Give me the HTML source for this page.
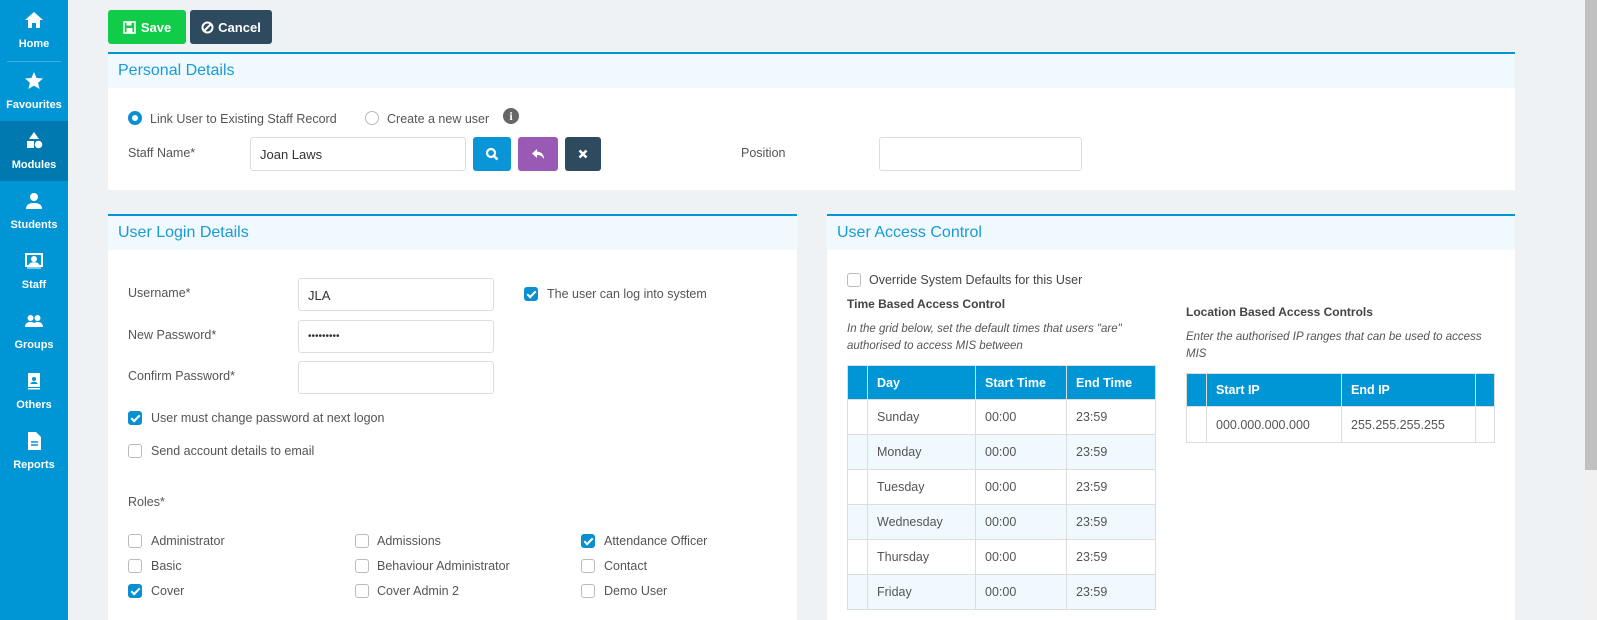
<!DOCTYPE html>
<html><head><meta charset="utf-8"><style>
*{box-sizing:border-box;margin:0;padding:0}
body{width:1597px;height:620px;overflow:hidden;background:#eef2f5;font-family:"Liberation Sans",sans-serif;font-size:12.5px;color:#555;position:relative}
.a{position:absolute}
.side{left:0;top:0;width:68px;height:620px;background:#0095d5}
.nav{position:absolute;left:0;width:68px;height:60px;color:#fff;font-weight:bold;font-size:11px;text-align:center}
.nav span{position:absolute;left:0;right:0;top:38px}
.nav svg{position:absolute;left:24px;top:10px}
.btn{position:absolute;border-radius:3px;color:#fff;font-weight:bold;font-size:13px;display:flex;align-items:center;justify-content:center}
.ph{position:absolute;border-top:2px solid #0095d5;background:#f0f9fd;height:36px;color:#1a9ad6;font-size:16px;padding:8px 10px}
.body{position:absolute;background:#fff}
.inp{position:absolute;border:1px solid #ddd;border-radius:3px;background:#fff;height:34px;padding:9px 9px;color:#333;font-size:13px}
.lb{position:absolute;color:#555}
.cb{position:absolute;width:14px;height:14px;border:1px solid #bbb;border-radius:3px;background:#fff}
.cb.on{background:#0a8fd0;border-color:#0a8fd0}
.cb.on::after{content:"";position:absolute;left:4px;top:1px;width:3px;height:7px;border:solid #fff;border-width:0 2px 2px 0;transform:rotate(45deg)}
table{position:absolute;border-collapse:collapse}
td,th{border:1px solid #ddd;text-align:left;padding:0 9px;font-size:12.5px}
th{background:#0095d5;color:#fff;border-color:#ddd}
tr.alt td{background:#f0f9fd}
i{font-size:11.5px;color:#555}
</style></head><body>
<div class="a side"></div>
<div class="nav" style="top:0"><svg width="20" height="20" viewBox="0 0 20 20"><path d="M10 2L1 10h3v8h4v-5h4v5h4v-8h3z" fill="#fff"/></svg><span>Home</span></div>
<div class="a" style="left:7px;top:61px;width:54px;height:1px;background:#3fb0e0"></div>
<div class="nav" style="top:61px"><svg width="20" height="20" viewBox="0 0 20 20"><path d="M10 1l2.6 6 6.4.5-4.9 4.2 1.5 6.3L10 14.6 4.4 18l1.5-6.3L1 7.5 7.4 7z" fill="#fff"/></svg><span>Favourites</span></div>
<div class="nav" style="top:121px;background:#0079b0"><svg width="20" height="20" viewBox="0 0 20 20"><path d="M10 1l5 7H5z M3 10h7v7H3z" fill="#fff"/><circle cx="14.5" cy="13.5" r="3.8" fill="#fff"/></svg><span>Modules</span></div>
<div class="nav" style="top:181px"><svg width="20" height="20" viewBox="0 0 20 20"><circle cx="10" cy="6" r="4" fill="#fff"/><path d="M2 18c0-5 4-6 8-6s8 1 8 6z" fill="#fff"/></svg><span>Students</span></div>
<div class="nav" style="top:241px"><svg width="20" height="20" viewBox="0 0 20 20"><rect x="2" y="3" width="16" height="12" fill="none" stroke="#fff" stroke-width="2"/><circle cx="10" cy="8" r="3" fill="#fff"/><path d="M5 14c1-3 9-3 10 0z M3 17h14" fill="#fff" stroke="#fff"/></svg><span>Staff</span></div>
<div class="nav" style="top:301px"><svg width="20" height="20" viewBox="0 0 20 20"><circle cx="6.5" cy="7" r="3" fill="#fff"/><circle cx="13.5" cy="7" r="3" fill="#fff"/><path d="M1 16c0-4 3-5 5.5-5s5.5 1 5.5 5z M9 16c0-4 2-5 4.5-5S19 12 19 16z" fill="#fff"/></svg><span>Groups</span></div>
<div class="nav" style="top:361px"><svg width="20" height="20" viewBox="0 0 20 20"><rect x="4" y="2" width="12" height="14" fill="#fff"/><circle cx="10" cy="8" r="2" fill="#0095d5"/><path d="M6.5 13c0-3 7-3 7 0z" fill="#0095d5"/><rect x="4" y="17" width="12" height="1.5" fill="#fff"/></svg><span>Others</span></div>
<div class="nav" style="top:421px"><svg width="20" height="20" viewBox="0 0 20 20"><path d="M4 1h8l5 5v13H4z" fill="#fff"/><path d="M7 11h7M7 14h7" stroke="#0095d5" stroke-width="1.6"/></svg><span>Reports</span></div>

<div class="a" style="left:1585px;top:0;width:12px;height:620px;background:#f0f0f0"></div>
<div class="a" style="left:1585px;top:0;width:12px;height:470px;background:#c1c1c1"></div>

<div class="btn" style="left:108px;top:10px;width:78px;height:34px;background:#10cc48"><svg width="13" height="13" viewBox="0 0 13 13" style="margin-right:5px"><rect x="1" y="1" width="11" height="11" fill="none" stroke="#fff" stroke-width="1.6"/><rect x="3.5" y="1" width="5" height="3.5" fill="#fff"/><rect x="3.5" y="7" width="6" height="5" fill="#fff"/></svg>Save</div>
<div class="btn" style="left:190px;top:10px;width:82px;height:34px;background:#2d4a5f"><svg width="13" height="13" viewBox="0 0 13 13" style="margin-right:4px"><circle cx="6.5" cy="6.5" r="5" fill="none" stroke="#fff" stroke-width="2"/><path d="M3 10L10 3" stroke="#fff" stroke-width="2"/></svg>Cancel</div>

<div class="ph" style="left:108px;top:52px;width:1407px">Personal Details</div>
<div class="body" style="left:108px;top:88px;width:1407px;height:102px"></div>
<div class="a" style="left:128px;top:111px;width:14px;height:14px;border:4px solid #0a8fd0;border-radius:50%"></div>
<div class="lb" style="left:150px;top:112px">Link User to Existing Staff Record</div>
<div class="a" style="left:365px;top:111px;width:14px;height:14px;border:1px solid #bbb;border-radius:50%"></div>
<div class="lb" style="left:387px;top:112px">Create a new user</div>
<div class="a" style="left:503px;top:108px;width:16px;height:16px;border-radius:50%;background:#666;color:#fff;font-weight:bold;font-size:12px;text-align:center;line-height:16px;font-family:'Liberation Serif',serif">i</div>
<div class="lb" style="left:128px;top:146px">Staff Name*</div>
<div class="inp" style="left:250px;top:137px;width:216px">Joan Laws</div>
<div class="btn" style="left:473px;top:137px;width:38px;height:34px;background:#0a95d6"><svg width="14" height="14" viewBox="0 0 14 14"><circle cx="6" cy="6" r="4" fill="none" stroke="#fff" stroke-width="2.2"/><path d="M9 9l3.5 3.5" stroke="#fff" stroke-width="2.5"/></svg></div>
<div class="btn" style="left:518px;top:137px;width:40px;height:34px;background:#9b59b6"><svg width="14" height="14" viewBox="0 0 14 14"><path d="M6 2L1 6.5 6 11V8c3 0 5 1 7 4 0-4-2-7-7-7.5z" fill="#fff"/></svg></div>
<div class="btn" style="left:565px;top:137px;width:36px;height:34px;background:#2d4a5f"><svg width="10" height="10" viewBox="0 0 10 10"><path d="M1.5 1.5l7 7M8.5 1.5l-7 7" stroke="#fff" stroke-width="2.6"/></svg></div>
<div class="lb" style="left:741px;top:146px">Position</div>
<div class="inp" style="left:879px;top:137px;width:203px"></div>

<div class="ph" style="left:108px;top:214px;width:689px">User Login Details</div>
<div class="body" style="left:108px;top:250px;width:689px;height:370px"></div>
<div class="ph" style="left:827px;top:214px;width:688px">User Access Control</div>
<div class="body" style="left:827px;top:250px;width:688px;height:370px"></div>

<div class="lb" style="left:128px;top:286px">Username*</div>
<div class="inp" style="left:298px;top:278px;width:196px;height:33px">JLA</div>
<div class="cb on" style="left:524px;top:287px"></div><div class="lb" style="left:547px;top:287px">The user can log into system</div>
<div class="lb" style="left:128px;top:328px">New Password*</div>
<div class="inp" style="left:298px;top:320px;width:196px;height:33px;font-size:10px;padding-top:10px">&#8226;&#8226;&#8226;&#8226;&#8226;&#8226;&#8226;&#8226;&#8226;</div>
<div class="lb" style="left:128px;top:369px">Confirm Password*</div>
<div class="inp" style="left:298px;top:361px;width:196px;height:33px"></div>
<div class="cb on" style="left:128px;top:411px"></div><div class="lb" style="left:151px;top:411px">User must change password at next logon</div>
<div class="cb" style="left:128px;top:444px"></div><div class="lb" style="left:151px;top:444px">Send account details to email</div>
<div class="lb" style="left:128px;top:495px">Roles*</div>
<div class="cb" style="left:128px;top:534px"></div><div class="lb" style="left:151px;top:534px">Administrator</div>
<div class="cb" style="left:355px;top:534px"></div><div class="lb" style="left:377px;top:534px">Admissions</div>
<div class="cb on" style="left:581px;top:534px"></div><div class="lb" style="left:604px;top:534px">Attendance Officer</div>
<div class="cb" style="left:128px;top:559px"></div><div class="lb" style="left:151px;top:559px">Basic</div>
<div class="cb" style="left:355px;top:559px"></div><div class="lb" style="left:377px;top:559px">Behaviour Administrator</div>
<div class="cb" style="left:581px;top:559px"></div><div class="lb" style="left:604px;top:559px">Contact</div>
<div class="cb on" style="left:128px;top:584px"></div><div class="lb" style="left:151px;top:584px">Cover</div>
<div class="cb" style="left:355px;top:584px"></div><div class="lb" style="left:377px;top:584px">Cover Admin 2</div>
<div class="cb" style="left:581px;top:584px"></div><div class="lb" style="left:604px;top:584px">Demo User</div>

<div class="cb" style="left:847px;top:273px"></div><div class="lb" style="left:869px;top:273px;color:#444">Override System Defaults for this User</div>
<div class="lb" style="left:847px;top:297px;font-weight:bold;color:#444;font-size:12px">Time Based Access Control</div>
<div class="lb" style="left:847px;top:320px;line-height:16px"><i>In the grid below, set the default times that users "are"<br>authorised to access MIS between</i></div>
<table style="left:847px;top:365px;width:309px">
<tr style="height:34px"><th style="width:20px"></th><th style="width:108px">Day</th><th style="width:91px">Start Time</th><th>End Time</th></tr>
<tr style="height:35px"><td></td><td>Sunday</td><td>00:00</td><td>23:59</td></tr>
<tr class="alt" style="height:35px"><td></td><td>Monday</td><td>00:00</td><td>23:59</td></tr>
<tr style="height:35px"><td></td><td>Tuesday</td><td>00:00</td><td>23:59</td></tr>
<tr class="alt" style="height:35px"><td></td><td>Wednesday</td><td>00:00</td><td>23:59</td></tr>
<tr style="height:35px"><td></td><td>Thursday</td><td>00:00</td><td>23:59</td></tr>
<tr class="alt" style="height:35px"><td></td><td>Friday</td><td>00:00</td><td>23:59</td></tr>
</table>
<div class="lb" style="left:1186px;top:305px;font-weight:bold;color:#444;font-size:12px">Location Based Access Controls</div>
<div class="lb" style="left:1186px;top:328px;line-height:16px"><i>Enter the authorised IP ranges that can be used to access<br>MIS</i></div>
<table style="left:1186px;top:373px;width:309px">
<tr style="height:33px"><th style="width:20px"></th><th style="width:135px">Start IP</th><th style="width:134px">End IP</th><th></th></tr>
<tr style="height:36px"><td></td><td>000.000.000.000</td><td>255.255.255.255</td><td></td></tr>
</table>
</body></html>
